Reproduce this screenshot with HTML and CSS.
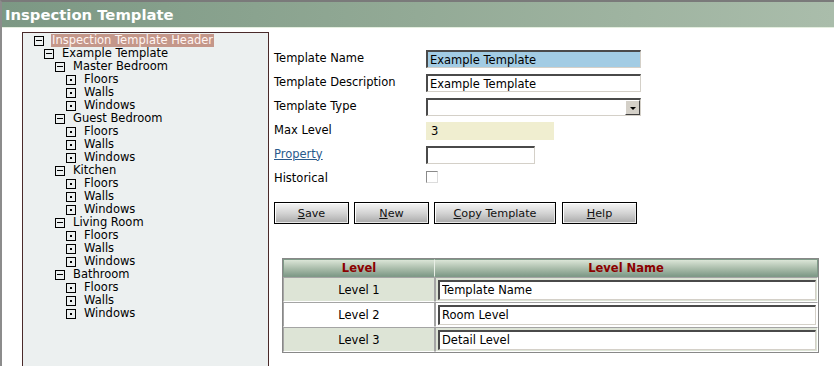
FILE: index.html
```html
<!DOCTYPE html>
<html>
<head>
<meta charset="utf-8">
<link rel="stylesheet" href="styles.css">
</head>
<body>
<div class="page">
  <div class="titlebar">Inspection Template</div>
  <div class="main">
    <div class="tree">
      <ul class="lvl0">
        <li><div class="node"><span class="ico minus"></span><span class="lbl sel">Inspection Template Header</span></div>
          <ul class="lvl1">
            <li><div class="node"><span class="ico minus"></span><span class="lbl">Example Template</span></div>
              <ul class="lvl2">
                <li><div class="node"><span class="ico minus"></span><span class="lbl">Master Bedroom</span></div>
                  <ul class="lvl3">
                    <li><div class="node"><span class="ico dot"></span><span class="lbl">Floors</span></div></li>
                    <li><div class="node"><span class="ico dot"></span><span class="lbl">Walls</span></div></li>
                    <li><div class="node"><span class="ico dot"></span><span class="lbl">Windows</span></div></li>
                  </ul>
                </li>
                <li><div class="node"><span class="ico minus"></span><span class="lbl">Guest Bedroom</span></div>
                  <ul class="lvl3">
                    <li><div class="node"><span class="ico dot"></span><span class="lbl">Floors</span></div></li>
                    <li><div class="node"><span class="ico dot"></span><span class="lbl">Walls</span></div></li>
                    <li><div class="node"><span class="ico dot"></span><span class="lbl">Windows</span></div></li>
                  </ul>
                </li>
                <li><div class="node"><span class="ico minus"></span><span class="lbl">Kitchen</span></div>
                  <ul class="lvl3">
                    <li><div class="node"><span class="ico dot"></span><span class="lbl">Floors</span></div></li>
                    <li><div class="node"><span class="ico dot"></span><span class="lbl">Walls</span></div></li>
                    <li><div class="node"><span class="ico dot"></span><span class="lbl">Windows</span></div></li>
                  </ul>
                </li>
                <li><div class="node"><span class="ico minus"></span><span class="lbl">Living Room</span></div>
                  <ul class="lvl3">
                    <li><div class="node"><span class="ico dot"></span><span class="lbl">Floors</span></div></li>
                    <li><div class="node"><span class="ico dot"></span><span class="lbl">Walls</span></div></li>
                    <li><div class="node"><span class="ico dot"></span><span class="lbl">Windows</span></div></li>
                  </ul>
                </li>
                <li><div class="node"><span class="ico minus"></span><span class="lbl">Bathroom</span></div>
                  <ul class="lvl3">
                    <li><div class="node"><span class="ico dot"></span><span class="lbl">Floors</span></div></li>
                    <li><div class="node"><span class="ico dot"></span><span class="lbl">Walls</span></div></li>
                    <li><div class="node"><span class="ico dot"></span><span class="lbl">Windows</span></div></li>
                  </ul>
                </li>
              </ul>
            </li>
          </ul>
        </li>
      </ul>
    </div>
    <div class="content">
      <div class="form">
        <div class="label">Template Name</div>
        <div class="field"><input class="txt wide focus" type="text" value="Example Template"></div>
        <div class="label">Template Description</div>
        <div class="field"><input class="txt wide" type="text" value="Example Template"></div>
        <div class="label">Template Type</div>
        <div class="field"><div class="select"><span class="sel-val"></span><span class="sel-btn"><span class="tri"></span></span></div></div>
        <div class="label">Max Level</div>
        <div class="field"><div class="readonly">3</div></div>
        <div class="label"><a class="link" href="#">Property</a></div>
        <div class="field"><input class="txt short" type="text" value=""></div>
        <div class="label">Historical</div>
        <div class="field"><span class="check"></span></div>
      </div>
      <div class="buttons">
        <button class="btn b-save"><u>S</u>ave</button>
        <button class="btn b-new"><u>N</u>ew</button>
        <button class="btn b-copy"><u>C</u>opy Template</button>
        <button class="btn b-help"><u>H</u>elp</button>
      </div>
      <table class="levels">
        <thead>
          <tr><th class="c1">Level</th><th class="c2">Level Name</th></tr>
        </thead>
        <tbody>
          <tr class="alt"><td class="c1">Level 1</td><td class="c2"><input class="txt cell" type="text" value="Template Name"></td></tr>
          <tr><td class="c1">Level 2</td><td class="c2"><input class="txt cell" type="text" value="Room Level"></td></tr>
          <tr class="alt"><td class="c1">Level 3</td><td class="c2"><input class="txt cell" type="text" value="Detail Level"></td></tr>
        </tbody>
      </table>
    </div>
  </div>
</div>
</body>
</html>
```

FILE: styles.css
```css
html, body {
  margin: 0;
  padding: 0;
  background: #fff;
}
body {
  font-family: "DejaVu Sans", Verdana, sans-serif;
  font-size: 11.5px;
  color: #000;
  overflow: hidden;
}
.page {
  border-left: 2px solid #8c8c8c;
  border-top: 2px solid #7a7a7a;
  height: 364px;
  overflow: hidden;
}
.titlebar {
  height: 25px;
  line-height: 25px;
  padding-left: 3px;
  background: linear-gradient(to right, #7c9884, #93aa96 50%, #aabdab);
  border-bottom: 1px solid #e4eedf;
  color: #fff;
  font-family: "DejaVu Sans", Verdana, sans-serif;
  font-weight: bold;
  font-size: 14.8px;
}
.main {
  display: flex;
  align-items: flex-start;
}
.tree {
  margin-left: 20px;
  margin-top: 4px;
  width: 245px;
  height: 340px;
  background: #ecf0f0;
  border: 1px solid #4a2a2a;
  padding-top: 1px;
}
.tree ul {
  list-style: none;
  margin: 0;
  padding: 0;
}
.tree ul.lvl0 { padding-left: 11px; }
.tree ul.lvl1 { padding-left: 10px; }
.tree ul.lvl2 { padding-left: 11px; }
.tree ul.lvl3 { padding-left: 11px; }
.node {
  display: flex;
  align-items: center;
  height: 13px;
  white-space: nowrap;
}
.ico {
  width: 8px;
  height: 8px;
  border: 1px solid #000;
  display: flex;
  align-items: center;
  justify-content: center;
  flex: none;
}
.ico.minus::after {
  content: "";
  width: 6px;
  height: 1px;
  background: #000;
}
.ico.dot::after {
  content: "";
  width: 2px;
  height: 2px;
  background: #000;
}
.lbl {
  margin-left: 7px;
  padding: 0 1px;
  line-height: 13px;
  color: #000;
}
.lbl.sel {
  background: #c4978a;
  color: #fff4f2;
}
.content {
  margin-left: 5px;
  padding-top: 19px;
}
.form {
  display: grid;
  grid-template-columns: 152px 220px;
  grid-auto-rows: 24px;
  align-items: center;
}
.label {
  line-height: 13px;
  padding-bottom: 2px;
}
.field {
  display: flex;
  align-items: center;
}
.link {
  color: #2a5a8c;
  text-decoration: underline;
}
.txt {
  box-sizing: border-box;
  height: 18px;
  margin: 0;
  padding: 0 2px;
  font-family: "DejaVu Sans", Verdana, sans-serif;
  font-size: 11.5px;
  color: #000;
  background: #fff;
  border-style: solid;
  border-width: 2px 1px 1px 2px;
  border-color: #4a4a4a #d4d0c8 #d4d0c8 #4a4a4a;
  outline: none;
}
.txt.wide { width: 215px; }
.txt.focus { background: #a2cce4; }
.txt.short { width: 109px; height: 18px; }
.select {
  box-sizing: border-box;
  width: 215px;
  height: 18px;
  display: flex;
  background: #fff;
  border-style: solid;
  border-width: 2px 1px 1px 2px;
  border-color: #4a4a4a #d4d0c8 #d4d0c8 #4a4a4a;
}
.sel-val { flex: 1; }
.sel-btn {
  box-sizing: border-box;
  width: 15px;
  height: 15px;
  background: #d4d0c8;
  border-style: solid;
  border-width: 1px;
  border-color: #fff #404040 #404040 #fff;
  display: flex;
  align-items: center;
  justify-content: center;
}
.tri {
  width: 0;
  height: 0;
  border-left: 3px solid transparent;
  border-right: 3px solid transparent;
  border-top: 3px solid #000;
  margin-top: 1px;
}
.readonly {
  box-sizing: border-box;
  width: 128px;
  height: 18px;
  line-height: 18px;
  padding-left: 5px;
  background: #f0eed0;
}
.check {
  box-sizing: border-box;
  width: 12px;
  height: 12px;
  background: #fff;
  border: 1px solid;
  border-color: #8a8a8a #dcdcdc #dcdcdc #8a8a8a;
  margin-top: -4px;
}
.buttons {
  display: flex;
  margin-top: 11px;
}
.btn {
  box-sizing: border-box;
  height: 22px;
  margin: 0 5px 0 0;
  padding: 0;
  border: 1px solid #000;
  box-shadow: inset 1px 1px 0 #fff, inset -1px -1px 0 #e8e8e8;
  background: linear-gradient(#f6f6f6, #d0d0d0 55%, #a9a9a9);
  font-family: "DejaVu Sans", Verdana, sans-serif;
  font-size: 11.2px;
  color: #111;
}
.b-save { width: 75px; }
.b-new { width: 75px; }
.b-copy { width: 122px; margin-right: 6px; }
.b-help { width: 75px; }
.levels {
  margin-top: 34px;
  margin-left: 8px;
  width: 537px;
  border-collapse: separate;
  border-spacing: 0;
  border: 1px solid #888;
}
.levels th {
  height: 16px;
  padding: 0;
  background: linear-gradient(#dbe5d7, #a8bba9 55%, #7f9a88);
  color: #8b0000;
  font-weight: bold;
  font-size: 11.5px;
  border: 1px solid #7f9a88;
  border-right-color: #e8efe6;
}
.levels th.c2 { border-right-color: #7f9a88; border-left: 0; }
.levels th.c1 { width: 153px; }
.levels td {
  height: 21px;
  padding: 1px 1px;
  text-align: center;
  border-style: solid;
  border-width: 1px;
  border-color: #a4a4a4 #fff #fff #a4a4a4;
}
.levels td.c1 { border-right-color: #a4a4a4; }
.levels td.c2 { text-align: left; padding: 1px 1px 1px 2px; }
.levels tr.alt td { background: #dde4d6; }
.txt.cell {
  width: 378px;
  height: 20px;
  font-size: 11.5px;
}
```
